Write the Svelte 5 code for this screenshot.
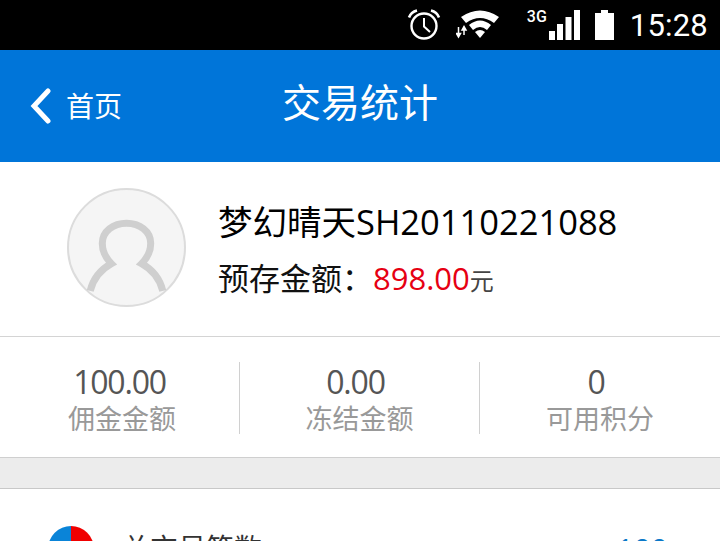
<script>
	const stats = [
		{ value: "100.00", label: "佣金金额" },
		{ value: "0.00", label: "冻结金额" },
		{ value: "0", label: "可用积分" },
	];
</script>

<div class="page">
	<div class="statusBar">
		<svg class="alarm" width="34" height="34" viewBox="0 0 34 34">
			<circle cx="17" cy="18" r="12.5" fill="none" stroke="#fff" stroke-width="2.4" />
			<path d="M17 10v8.5l6 5.5" fill="none" stroke="#fff" stroke-width="2" />
			<path d="M2 9.500Q4 4 10 2.500M32 9.500Q30 4 24 2.500" fill="none" stroke="#fff" stroke-width="2.600" />
		</svg>
		<svg class="wifi" width="44" height="30" viewBox="0 0 44 30">
			<path d="M5 7Q24 -6 43 7L38 13Q24 3 10 13Z" fill="#fff" />
			<path d="M13 15Q24 6 35 15L31 20Q24 14 17 20Z" fill="#fff" />
			<path d="M19 22Q24 18 29 22L24 28Z" fill="#fff" />
			<path d="M2.500 17v9M0.500 23.500l2 3.500 2-3.500ZM8 16v9M6 20l2-3.500 2 3.500Z" stroke="#fff" stroke-width="1.500" fill="#fff" />
		</svg>
		<div class="signal">
			<span class="net">3G</span>
			<svg width="31" height="30" viewBox="0 0 31 30">
				<path d="M0 21h6v9H0ZM8 14h6v16H8ZM16.500 7h6v23h-6ZM25 0h6v30h-6Z" fill="#fff" />
			</svg>
		</div>
		<svg class="battery" width="19" height="30" viewBox="0 0 19 30">
			<path d="M6 0h7v3h6v27H0V3h6Z" fill="#fff" />
		</svg>
		<span class="clock">15:28</span>
	</div>

	<header class="navBar">
		<div class="back">
			<svg width="24" height="36" viewBox="0 0 24 36">
				<path d="M19 3L5 18l14 15" fill="none" stroke="#fff" stroke-width="5" stroke-linecap="round" />
			</svg>
			<span>首页</span>
		</div>
		<h1>交易统计</h1>
	</header>

	<section class="profile">
		<div class="avatar">
			<svg width="119" height="119" viewBox="0 0 118 118">
				<circle cx="59" cy="59" r="58" fill="#f5f5f5" stroke="#dcdcdc" stroke-width="2" />
				<path
					d="M23 102C26 90 33 81 44 75C37 68 35 62 35 55C35 43 46 35 59 35C72 35 83 43 83 55C83 62 81 68 74 75C85 81 92 90 95 102"
					fill="none"
					stroke="#cfcfcf"
					stroke-width="7"
				/>
			</svg>
		</div>
		<div class="info">
			<div class="name">梦幻晴天SH20110221088</div>
			<div class="balance">预存金额：<span class="amount">898.00</span><span class="unit">元</span></div>
		</div>
	</section>

	<section class="stats">
		{#each stats as stat}
			<div class="stat">
				<div class="value">{stat.value}</div>
				<div class="label">{stat.label}</div>
			</div>
		{/each}
	</section>

	<div class="spacer"></div>

	<section class="row">
		<div class="pie"></div>
		<span class="rowLabel">总交易笔数</span>
		<span class="rowValue">100</span>
	</section>
</div>

<style>
	:global(body) {
		background: #fff;
		overflow: hidden;
	}

	.page {
		width: 720px;
		height: 541px;
		overflow: hidden;
		font-family: "Open Sans", "Noto Sans CJK SC", sans-serif;
	}

	.statusBar {
		height: 50px;
		background: #000;
		display: flex;
		align-items: center;
		justify-content: flex-end;
		padding-right: 12px;
		box-sizing: border-box;
		color: #fff;
	}

	.alarm {
		margin-right: 15px;
	}

	.wifi {
		margin-right: 27px;
	}

	.signal {
		display: flex;
		align-items: flex-end;
		margin-right: 15px;
	}

	.net {
		font-family: "Roboto", sans-serif;
		font-size: 16px;
		font-weight: 500;
		align-self: flex-start;
		line-height: 16px;
		margin-right: 2px;
		margin-top: -1px;
	}

	.battery {
		margin-right: 16px;
	}

	.clock {
		font-family: "Roboto", sans-serif;
		font-size: 31px;
		font-weight: 400;
		letter-spacing: 0.2px;
	}

	.navBar {
		height: 112px;
		background: #0075d9;
		color: #fff;
		display: flex;
		align-items: center;
		justify-content: center;
		position: relative;
	}

	.navBar h1 {
		margin: 0 0 8px;
		font-size: 39px;
		line-height: 50px;
		font-weight: 400;
	}

	.back {
		position: absolute;
		left: 29px;
		top: 36px;
		display: flex;
		align-items: center;
		gap: 13px;
		font-size: 28px;
		line-height: 40px;
	}

	.profile {
		height: 175px;
		box-sizing: border-box;
		border-bottom: 1px solid #d4d4d4;
		display: flex;
		align-items: flex-start;
		padding: 26px 0 0 67px;
		gap: 32px;
	}

	.avatar {
		height: 119px;
	}

	.info {
		padding-top: 10px;
	}

	.name {
		font-size: 34.5px;
		line-height: 48px;
		color: #000;
	}

	.balance {
		font-size: 31px;
		line-height: 44px;
		margin-top: 10px;
		color: #111;
	}

	.amount {
		color: #e60012;
		font-size: 31px;
	}

	.unit {
		font-size: 24px;
		color: #444;
	}

	.stats {
		height: 121px;
		box-sizing: border-box;
		border-bottom: 1px solid #cfcfcf;
		display: flex;
		padding-top: 25px;
	}

	.stat {
		width: 240px;
		height: 72px;
		box-sizing: border-box;
		text-align: center;
		border-right: 1px solid #d0d0d0;
	}

	.stat:last-child {
		border-right: none;
	}

	.stat:nth-child(n + 2) .value {
		padding-right: 8px;
	}

	.stat:first-child .label {
		padding-left: 5px;
	}

	.value {
		font-size: 32px;
		line-height: 40px;
		color: #555;
		letter-spacing: -1.2px;
	}

	.label {
		font-size: 27px;
		line-height: 34px;
		color: #999;
	}

	.spacer {
		height: 30px;
		background: #ececec;
		border-bottom: 1px solid #c8c8c8;
	}

	.row {
		display: flex;
		align-items: flex-start;
		height: 100px;
		padding: 37px 52px 0 48px;
	}

	.pie {
		width: 46px;
		height: 46px;
		border-radius: 50%;
		background: linear-gradient(to right, #0a84d8 49%, #fff 49%, #fff 51%, #f00000 51%);
		margin-right: 32px;
	}

	.rowLabel {
		font-size: 28px;
		line-height: 38px;
		margin-top: 3px;
		margin-left: -4px;
		color: #333;
	}

	.rowValue {
		margin-left: auto;
		font-size: 30px;
		line-height: 38px;
		margin-top: 4px;
		color: #0a78c8;
	}
</style>
